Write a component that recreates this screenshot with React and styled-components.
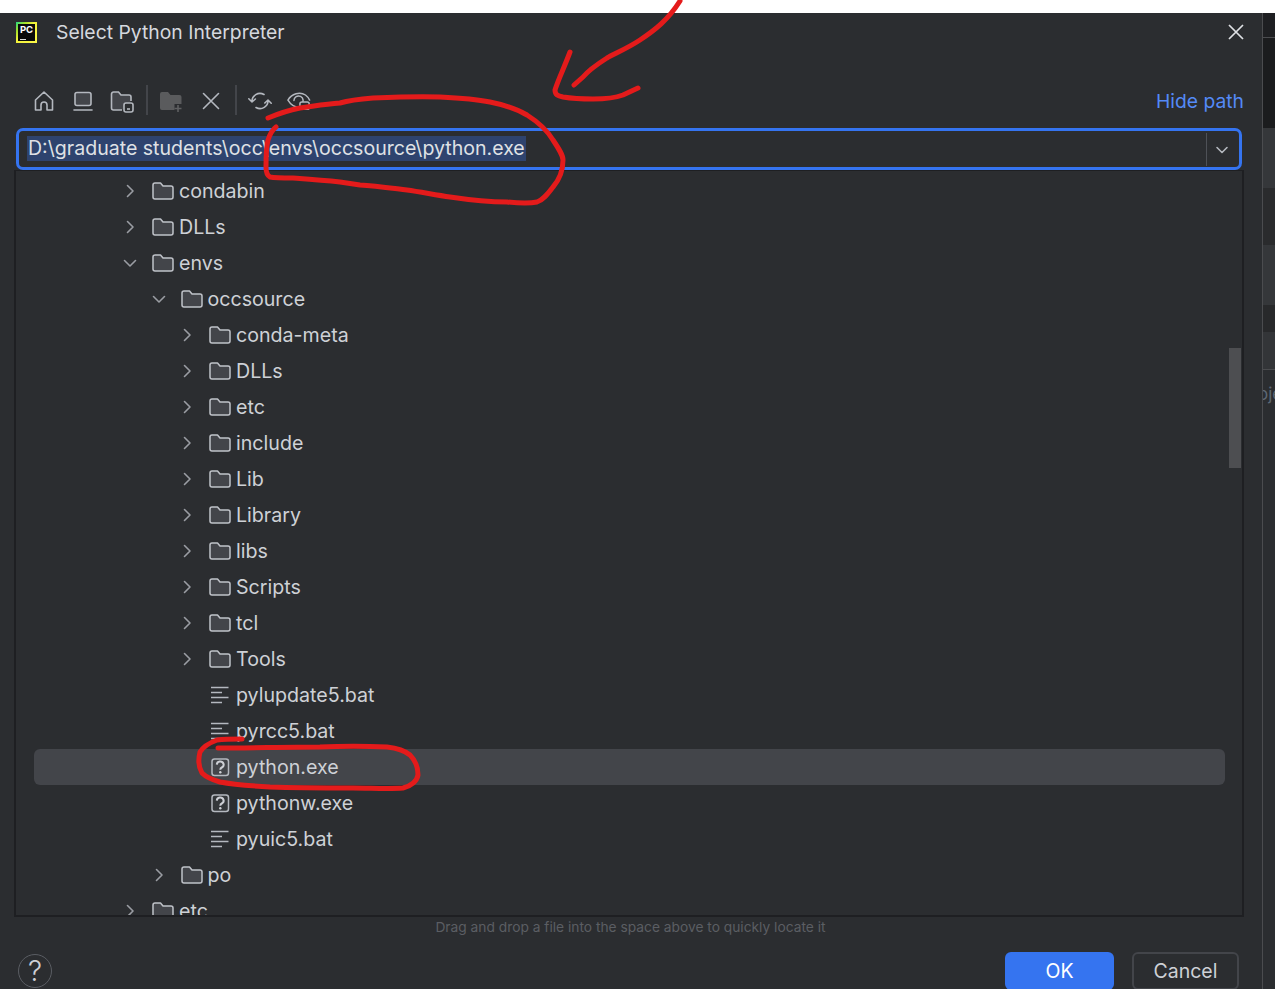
import React from "react";
import styled, { createGlobalStyle } from "styled-components";

const Global = createGlobalStyle`
  html, body { margin: 0; padding: 0; background: #fff; overflow: hidden; }
  * { box-sizing: border-box; }
`;

const Page = styled.div`
  position: relative;
  width: 1275px;
  height: 989px;
  overflow: hidden;
  display: flex;
  flex-direction: column;
  background: #fff;
  font-family: Inter, "Noto Sans", sans-serif;
`;
const TopGap = styled.div`
  height: 13px;
  flex: none;
`;
const Main = styled.div`
  flex: 1;
  display: flex;
  min-height: 0;
`;
const Dialog = styled.div`
  width: 1262px;
  flex: none;
  display: flex;
  flex-direction: column;
  background: #2b2d30;
  color: #dfe1e5;
`;
const TitleBar = styled.div`
  height: 38px;
  flex: none;
  display: flex;
  align-items: center;
  padding: 0 16px;
`;
const Title = styled.div`
  font-size: 19.35px;
  margin-left: 19px;
  flex: 1;
  color: #d5d8de;
`;
const Logo = styled.div`
  position: relative;
  width: 21px;
  height: 21px;
  flex: none;
  padding: 2px;
  background: linear-gradient(135deg, #21d789 0%, #9fe02a 22%, #f2f23a 45%, #fcf84a 100%);
`;
const LogoInner = styled.div`
  width: 100%;
  height: 100%;
  background: #0a0a0a;
  padding: 2px 2px 0;
  display: flex;
  flex-direction: column;
  justify-content: space-between;
`;
const LogoText = styled.div`
  color: #fff;
  font-size: 9.5px;
  font-weight: 700;
  line-height: 8px;
  letter-spacing: -0.2px;
`;
const LogoBar = styled.div`
  width: 6px;
  height: 1px;
  background: #ddd;
  margin-bottom: 1px;
`;
const CloseBtn = styled.div`
  width: 18px;
  height: 18px;
  margin-right: 1px;
  display: flex;
`;
const Toolbar = styled.div`
  height: 77px;
  flex: none;
  display: flex;
  align-items: flex-end;
  padding: 0 18px 10px 32px;
`;
const ToolIcon = styled.div`
  width: 24px;
  height: 24px;
  flex: none;
  margin-right: ${(p) => p.$gap ?? 15}px;
  display: flex;
  margin-bottom: 5px;
`;
const ToolSep = styled.div`
  width: 2px;
  height: 30px;
  flex: none;
  background: #43454a;
  margin: 0 11px 3px 0;
`;
const HidePath = styled.div`
  margin-left: auto;
  margin-bottom: 5px;
  color: #548af7;
  font-size: 19.3px;
  line-height: 24px;
`;
const PathField = styled.div`
  margin: 0 20px 0 16px;
  height: 42px;
  flex: none;
  border: 3px solid #3574f0;
  border-radius: 7px;
  display: flex;
  align-items: center;
  padding-left: 8px;
`;
const PathText = styled.div`
  flex: 1;
  font-size: 19.57px;
  color: #dfe1e5;
  padding-bottom: 2px;
`;
const Selected = styled.span`
  background: #2e436e;
  padding: 0 1px;
  display: inline-block;
  line-height: 25px;
`;
const FieldSep = styled.div`
  width: 1px;
  height: 33px;
  background: #4e5157;
`;
const FieldArrow = styled.div`
  width: 32px;
  display: flex;
  justify-content: center;
  padding: 2px 3px 0 0;
`;
const Tree = styled.div`
  position: relative;
  margin: 0 18px 0 14px;
  height: 747px;
  flex: none;
  border: 2px solid #1e1f22;
  border-top-width: 1px;
  overflow: hidden;
  padding-top: 2px;
`;
const Row = styled.div`
  height: 36px;
  margin: 0 17px 0 18px;
  border-radius: 6px;
  background: ${(p) => (p.$selected ? "#43454a" : "transparent")};
  display: flex;
  align-items: center;
  padding-left: ${(p) => 88 + p.$depth * 28.5}px;
  font-size: 19.62px;
  color: #ced1d6;
`;
const Chevron = styled.div`
  width: 16px;
  height: 16px;
  flex: none;
  display: flex;
  margin-right: 14px;
`;
const ItemIcon = styled.div`
  width: 22px;
  height: 22px;
  flex: none;
  display: flex;
  margin-right: 5px;
`;
const Scrollbar = styled.div`
  position: absolute;
  right: 1px;
  top: 177px;
  width: 12px;
  height: 120px;
  background: #4d4e51;
`;
const Hint = styled.div`
  height: 20px;
  flex: none;
  padding-right: 1px;
  text-align: center;
  font-size: 13.77px;
  line-height: 20px;
  color: #5b5e63;
`;
const Footer = styled.div`
  flex: 1;
  display: flex;
  align-items: flex-start;
  padding: 15px 22px 0 18px;
`;
const Help = styled.div`
  width: 34px;
  height: 34px;
  margin-top: 2px;
  border-radius: 50%;
  border: 1px solid #5a5d63;
  display: flex;
  align-items: center;
  justify-content: center;
  color: #ced0d6;
  font-size: 28px;
  font-weight: 300;
`;
const Button = styled.div`
  width: ${(p) => p.$w}px;
  height: 38px;
  margin-left: ${(p) => p.$ml || 0}px;
  border-radius: 6px;
  display: flex;
  align-items: center;
  justify-content: center;
  font-size: 19.5px;
  color: ${(p) => (p.$primary ? "#ffffff" : "#ced1d6")};
  background: ${(p) => (p.$primary ? "#3574f0" : "transparent")};
  border: ${(p) => (p.$primary ? "none" : "2px solid #43454a")};
`;
const Side = styled.div`
  flex: 1;
  display: flex;
  flex-direction: column;
  border-left: 1px solid #4b4c4f;
  background: #2b2d30;
  overflow: hidden;
`;
const SideBand = styled.div`
  height: ${(p) => p.$h}px;
  flex: none;
  background: ${(p) => p.$bg};
  border-bottom: ${(p) => (p.$line ? "1px solid #4b4c4f" : "none")};
`;
const SideText = styled.div`
  font-size: 17px;
  color: #5e6874;
  margin: 14px 0 0 -5px;
  white-space: nowrap;
`;
const Annotation = styled.svg`
  position: absolute;
  left: 0;
  top: 0;
  width: 1275px;
  height: 989px;
  pointer-events: none;
`;

const S = { fill: "none", stroke: "#b4b8bf", strokeWidth: 1.6, strokeLinecap: "round", strokeLinejoin: "round" };

const ChevronRight = () => (
  <svg width="16" height="16" viewBox="0 0 16 16"><path d="M5.5 2.5 L11 8 L5.5 13.5" {...S} stroke="#9a9da3" /></svg>
);
const ChevronDown = () => (
  <svg width="16" height="16" viewBox="0 0 16 16"><path d="M2.5 5.5 L8 11 L13.5 5.5" {...S} stroke="#9a9da3" /></svg>
);
const FolderGlyph = () => (
  <svg width="22" height="22" viewBox="0 0 22 22">
    <path d="M1 5 a2 2 0 0 1 2-2 h5.5 l2.5 3 h8 a2 2 0 0 1 2 2 v9 a2 2 0 0 1-2 2 h-16 a2 2 0 0 1-2-2 z" fill="#43454a" stroke="#c0c3c9" strokeWidth="1.5" strokeLinejoin="round" />
  </svg>
);
const TextFileGlyph = () => (
  <svg width="22" height="22" viewBox="0 0 22 22">
    <path d="M2 3.500 H19.500 M2 8.500 H13 M2 13.500 H19.500 M2 18.500 H13" stroke="#b4b8bf" strokeWidth="1.7" />
  </svg>
);
const UnknownGlyph = () => (
  <svg width="22" height="22" viewBox="0 0 22 22">
    <rect x="3" y="3" width="16.5" height="16.5" rx="2.5" fill="#43454a" fillOpacity="0.4" stroke="#b4b8bf" strokeWidth="1.5" />
    <path d="M7.8 8.600 a3.400 3.200 0 1 1 5 2.900 c-1.200 .6-1.500 1.100-1.500 2.300" fill="none" stroke="#ced0d6" strokeWidth="2" />
    <circle cx="11.300" cy="16.300" r="1.200" fill="#ced0d6" />
  </svg>
);

const tree = [
  [0, "r", "condabin"], [0, "r", "DLLs"], [0, "d", "envs"], [1, "d", "occsource"],
  [2, "r", "conda-meta"], [2, "r", "DLLs"], [2, "r", "etc"], [2, "r", "include"],
  [2, "r", "Lib"], [2, "r", "Library"], [2, "r", "libs"], [2, "r", "Scripts"],
  [2, "r", "tcl"], [2, "r", "Tools"], [2, "t", "pylupdate5.bat"], [2, "t", "pyrcc5.bat"],
  [2, "u", "python.exe", true], [2, "u", "pythonw.exe"], [2, "t", "pyuic5.bat"],
  [1, "r", "po"], [0, "r", "etc"],
];

const TreeRow = ({ depth, kind, label, selected }) => (
  <Row $depth={depth} $selected={selected}>
    <Chevron>{kind === "r" ? <ChevronRight /> : kind === "d" ? <ChevronDown /> : null}</Chevron>
    <ItemIcon>
      {kind === "t" ? <TextFileGlyph /> : kind === "u" ? <UnknownGlyph /> : <FolderGlyph />}
    </ItemIcon>
    {label}
  </Row>
);

const bands = [
  [25, "#1e1f22", true], [90, "#1b1c1e"], [60, "#35373a"], [57, "#2a2b2d"],
  [60, "#35373a"], [27, "#28292b"], [38, "#333538", true],
];

export default function App() {
  return (
    <Page>
      <Global />
      <TopGap />
      <Main>
        <Dialog>
          <TitleBar>
            <Logo>
              <LogoInner>
                <LogoText>PC</LogoText>
                <LogoBar />
              </LogoInner>
            </Logo>
            <Title>Select Python Interpreter</Title>
            <CloseBtn>
              <svg width="18" height="18" viewBox="0 0 18 18"><path d="M2 2 L16 16 M16 2 L2 16" stroke="#dfe1e5" strokeWidth="1.7" /></svg>
            </CloseBtn>
          </TitleBar>
          <Toolbar>
            <ToolIcon $gap={15}>
              <svg width="24" height="24" viewBox="0 0 24 24"><path d="M3.500 11 L12 3 L20.500 11 V21 H15 V16 a3 3 0 0 0-6 0 V21 H3.500 Z" {...S} /></svg>
            </ToolIcon>
            <ToolIcon $gap={15}>
              <svg width="24" height="24" viewBox="0 0 24 24"><rect x="4" y="3.500" width="16" height="13" rx="2" fill="#43454a" stroke="#b4b8bf" strokeWidth="1.6" /><path d="M3 21 H21" {...S} /></svg>
            </ToolIcon>
            <ToolIcon $gap={12}>
              <svg width="24" height="24" viewBox="0 0 24 24"><path d="M12 21 H3.500 a2 2 0 0 1-2-2 V5 a2 2 0 0 1 2-2 h5 l2.500 3 h8 a2 2 0 0 1 2 2 v4" fill="#43454a" stroke="#b4b8bf" strokeWidth="1.6" /><rect x="14" y="14" width="9" height="9" rx="2" fill="#2b2d30" stroke="#b4b8bf" strokeWidth="1.6" /><path d="M17 20 H20" stroke="#b4b8bf" strokeWidth="1.6" /></svg>
            </ToolIcon>
            <ToolSep />
            <ToolIcon $gap={16}>
              <svg width="24" height="24" viewBox="0 0 24 24"><path d="M1 5 a2 2 0 0 1 2-2 h6 l2.500 3 h9 a2 2 0 0 1 2 2 v7 h-7 v6 H3 a2 2 0 0 1-2-2 Z" fill="#5a5b5d" /><path d="M19 16 V23 M15.500 19.500 H22.500" stroke="#5f6062" strokeWidth="1.6" /></svg>
            </ToolIcon>
            <ToolIcon $gap={12}>
              <svg width="24" height="24" viewBox="0 0 24 24"><path d="M4.500 4.500 L19.500 19.500 M19.500 4.500 L4.500 19.500" {...S} /></svg>
            </ToolIcon>
            <ToolSep />
            <ToolIcon $gap={15}>
              <svg width="24" height="24" viewBox="0 0 24 24"><path d="M4 13 a8 8 0 0 1 12-7.500 M20 11 a8 8 0 0 1-12 7.500 M0.800 9.800 L4 13 L7.400 10 M16.800 14 L20 11 L23.200 14.200" {...S} /></svg>
            </ToolIcon>
            <ToolIcon $gap={0}>
              <svg width="26" height="24" viewBox="0 0 26 24"><path d="M1 11 C5 4 14 1.500 20 5.500 C22 7 23.500 9 24.500 11 M1 11 C4 16 9 19 14 19" {...S} /><path d="M7.500 11.500 a5 5 0 1 1 8 4" {...S} /><rect x="14" y="13" width="10" height="8" rx="2" fill="#2b2d30" stroke="#b4b8bf" strokeWidth="1.6" /></svg>
            </ToolIcon>
            <HidePath>Hide path</HidePath>
          </Toolbar>
          <PathField>
            <PathText><Selected>D:\graduate students\occ\envs\occsource\python.exe</Selected></PathText>
            <FieldSep />
            <FieldArrow>
              <svg width="14" height="14" viewBox="0 0 14 14"><path d="M2 4.500 L7 9.500 L12 4.500" {...S} /></svg>
            </FieldArrow>
          </PathField>
          <Tree>
            {tree.map(([depth, kind, label, selected], i) => (
              <TreeRow key={i} depth={depth} kind={kind} label={label} selected={selected} />
            ))}
            <Scrollbar />
          </Tree>
          <Hint>Drag and drop a file into the space above to quickly locate it</Hint>
          <Footer>
            <Help>?</Help>
            <Button $primary $w={109} $ml={953}>OK</Button>
            <Button $w={107} $ml={18}>Cancel</Button>
          </Footer>
        </Dialog>
        <Side>
          {bands.map(([h, bg, line], i) => (
            <SideBand key={i} $h={h} $bg={bg} $line={line} />
          ))}
          <SideText>oje</SideText>
        </Side>
      </Main>
      <Annotation viewBox="0 0 1275 989" fill="none" stroke="#e41b1b" strokeWidth="5" strokeLinecap="round" strokeLinejoin="round">
        <path d="M680 1 C668 20 655 30 640 40 C628 48 614 54 607 58 C596 65 588 71 583 77 L574 85" />
        <path d="M570 52 C564 68 558 80 555 90 C555 95 558 96 563 97 C575 99 585 99 593 99 C605 99 615 98 623 95 L638 88" />
        <path d="M268 118 C280 113 290 110 300 108 C315 106 325 104 340 103 C350 100 360 99 373 98 C395 97 420 96 440 97 C460 98 475 99 490 102 C505 105 517 109 527 115 C538 122 547 130 553 140 C559 149 563 155 563 160 C563 170 559 180 553 187 C547 195 543 200 537 202 C528 204 517 203 507 202 C490 202 470 200 450 197 C436 195 421 192 407 190 C390 188 375 186 360 185 L340 182 C322 180 307 179 293 178 C285 178 275 178 270 177 C266 175 266 170 266 167 C266 157 266 148 268 140 C270 134 272 130 276 127" />
        <path d="M242 739 C232 739 225 739 217 740 C209 743 203 747 200 752 C198 760 199 768 202 773 C207 778 213 780 220 782 C236 785 253 786 270 787 C298 788 325 788 353 788 C370 788 390 789 403 788 C411 786 417 781 418 775 C418 767 415 760 410 755 C404 750 396 748 387 747 C365 746 342 746 320 747 C285 747 250 748 218 748" />
      </Annotation>
    </Page>
  );
}
